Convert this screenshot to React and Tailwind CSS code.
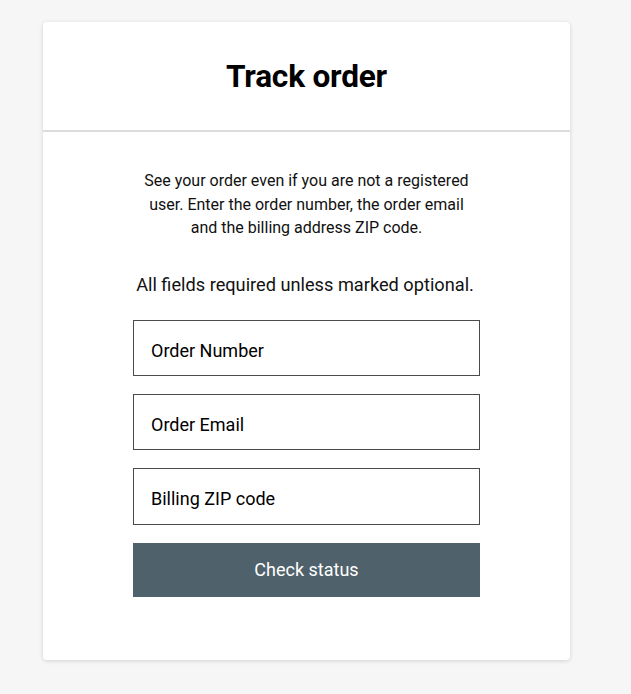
import React from 'react';

const FIELDS = ['Order Number', 'Order Email', 'Billing ZIP code'];

const App = () => {
  return (
    <div className="min-h-[694px] bg-[#f6f6f6] pt-[22px] font-['Roboto',sans-serif]">
      <div className="ml-[43px] w-[527px] h-[638px] rounded bg-white shadow-[0_1px_4px_rgba(0,0,0,0.15)]">
        {/* Header */}
        <div className="h-[110px] flex items-center justify-center border-b-2 border-[#dcdcdc]">
          <h1 className="text-[31.6px] font-bold text-black tracking-[-0.2px] mt-[1px]">Track order</h1>
        </div>

        {/* Body */}
        <div className="flex flex-col items-center pt-[37px]">
          <p className="w-[330px] text-center text-[16px] leading-[23.5px] text-[#111]">
            See your order even if you are not a registered user. Enter the order number, the order email and the billing address ZIP code.
          </p>
          <p className="mt-[33px] mr-[3px] text-[18.2px] leading-[24px] text-[#111]">
            All fields required unless marked optional.
          </p>

          <form className="mt-[23px] w-[347px] flex flex-col gap-[18px]">
            {FIELDS.map((label) => (
              <input
                key={label}
                type="text"
                placeholder={label}
                className="h-[56.4px] w-full border border-[#4a4a4a] px-[17px] pt-[5px] text-[18px] text-black placeholder:text-black outline-none"
              />
            ))}
            <button
              type="button"
              className="h-[54px] w-full bg-[#4f616b] text-white text-[18px]"
            >
              Check status
            </button>
          </form>
        </div>
      </div>
    </div>
  );
};

export default App;
